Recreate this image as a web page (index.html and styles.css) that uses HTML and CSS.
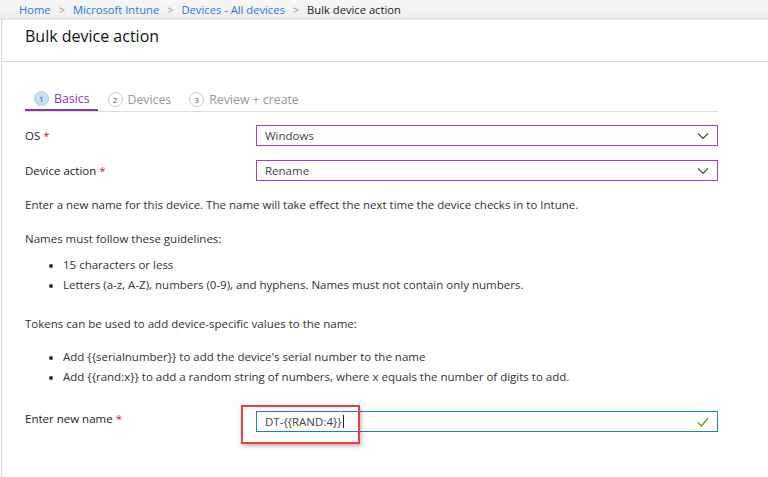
FILE: index.html
```html
<!DOCTYPE html>
<html lang="en">
<head>
  <meta charset="UTF-8" />
  <title>Bulk device action</title>
  <link rel="stylesheet" href="styles.css">
</head>
<body>
  <div class="crumbs">
    <a href="#">Home</a><span class="sep">&gt;</span>
    <a href="#">Microsoft Intune</a><span class="sep">&gt;</span>
    <a href="#">Devices - All devices</a><span class="sep">&gt;</span>
    <span class="current">Bulk device action</span>
  </div>

  <div class="panel">
    <div class="header">
      <h1>Bulk device action</h1>
    </div>

    <div class="body">
      <div class="tabs">
        <div class="tab active"><span class="num">1</span>Basics</div>
        <div class="tab"><span class="num">2</span>Devices</div>
        <div class="tab"><span class="num">3</span>Review + create</div>
      </div>

      <div class="field">
        <label>OS <span class="req">*</span></label>
        <div class="select">
          <span>Windows</span>
          <svg width="12" height="8" viewBox="0 0 12 8"><path d="M1 1.5 L6 6.5 L11 1.5" fill="none" stroke="#444" stroke-width="1.1"/></svg>
        </div>
      </div>

      <div class="field">
        <label>Device action <span class="req">*</span></label>
        <div class="select">
          <span>Rename</span>
          <svg width="12" height="8" viewBox="0 0 12 8"><path d="M1 1.5 L6 6.5 L11 1.5" fill="none" stroke="#444" stroke-width="1.1"/></svg>
        </div>
      </div>

      <p class="first">Enter a new name for this device. The name will take effect the next time the device checks in to Intune.</p>
      <p>Names must follow these guidelines:</p>
      <ul>
        <li>15 characters or less</li>
        <li>Letters (a-z, A-Z), numbers (0-9), and hyphens. Names must not contain only numbers.</li>
      </ul>

      <p class="tokens">Tokens can be used to add device-specific values to the name:</p>
      <ul class="token-list">
        <li>Add {{serialnumber}} to add the device's serial number to the name</li>
        <li>Add {{rand:x}} to add a random string of numbers, where x equals the number of digits to add.</li>
      </ul>

      <div class="field name-field">
        <label>Enter new name <span class="req">*</span></label>
        <div class="textbox">
          <span class="value">DT-{{RAND:4}}<span class="caret"></span></span>
          <svg width="12" height="10" viewBox="0 0 12 10"><path d="M1 5.5 L4.5 9 L11 1" fill="none" stroke="#57a300" stroke-width="1.2"/></svg>
          <div class="highlight"></div>
        </div>
      </div>
    </div>
  </div>
</body>
</html>
```

FILE: styles.css
```css
html, body {
  height: 100%;
}

body {
  margin: 0;
  font-family: 'Open Sans', 'Noto Sans', sans-serif;
  font-size: 11.5px;
  color: #323130;
  background: #fff;
  overflow: hidden;
  display: flex;
  flex-direction: column;
}

.crumbs {
  height: 18px;
  padding-left: 19px;
  display: flex;
  align-items: center;
  background: linear-gradient(#f7f7f7, #efefef);
  border-bottom: 2px solid #e4e4e4;
  font-size: 11.2px;
}

.crumbs a {
  color: #1f7ad6;
  text-decoration: none;
}

.crumbs .sep {
  color: #999;
  margin: 0 8px;
  font-size: 11px;
}

.crumbs .current {
  color: #222;
}

.panel {
  flex: 1;
  border-left: 1px solid #d6d6d6;
  margin-left: 1px;
}

.header {
  height: 41px;
  border-bottom: 1px solid #d8d8d8;
  padding-left: 23px;
}

h1 {
  margin: 0;
  padding-top: 5px;
  font-size: 16px;
  font-weight: 400;
  color: #111;
}

.body {
  padding: 0 50px 0 23px;
}

.tabs {
  display: flex;
  margin-top: 26px;
  border-bottom: 1px solid #dcdcdc;
  height: 23px;
}

.tab {
  display: flex;
  align-items: center;
  height: 22px;
  padding: 0 8px 0 9px;
  margin-right: 1px;
  color: #999;
  font-size: 12.3px;
}

.tab.active {
  color: #8f33a8;
  border-bottom: 2px solid #8f33a8;
  height: 21px;
}

.num {
  display: inline-flex;
  align-items: center;
  justify-content: center;
  width: 13px;
  height: 13px;
  border: 1px solid #ccc;
  border-radius: 50%;
  font-size: 8px;
  color: #555;
  margin-right: 5px;
}

.tab.active .num {
  background: #c7e0f4;
  border-color: #a9cdea;
  color: #1b4b73;
}

.field {
  display: flex;
  align-items: center;
  margin-top: 13px;
}

.field + .field {
  margin-top: 14px;
}

.field label {
  width: 231px;
  color: #222;
}

.req {
  color: #c4262e;
}

.select, .textbox {
  flex: 1;
  height: 19px;
  display: flex;
  align-items: center;
  justify-content: space-between;
  padding: 0 8px;
  border: 1px solid #9c3fbd;
  color: #444;
  position: relative;
}

p {
  margin: 0;
  line-height: 16px;
}

p.first {
  margin-top: 16px;
}

p + p {
  margin-top: 18px;
}

ul {
  margin: 8px 0 0 0;
  padding-left: 38px;
}

li {
  line-height: 20px;
}

li::marker {
  font-size: 10px;
}

p.tokens {
  margin-top: 21px;
}

ul.token-list {
  margin-top: 15px;
}

.name-field {
  margin-top: 24px;
  align-items: flex-start;
}

.name-field label {
  line-height: 16px;
}

.textbox {
  border-color: #1b7ad8;
  margin-top: 0;
}

.value {
  display: flex;
  align-items: center;
}

.caret {
  display: inline-block;
  width: 1px;
  height: 13px;
  background: #222;
  margin-left: 1px;
}

.highlight {
  position: absolute;
  left: -16px;
  top: -7px;
  width: 115px;
  height: 35px;
  border: 2px solid #ef3e42;
  box-shadow: 1px 2px 4px rgba(0, 0, 0, 0.3);
}
```
